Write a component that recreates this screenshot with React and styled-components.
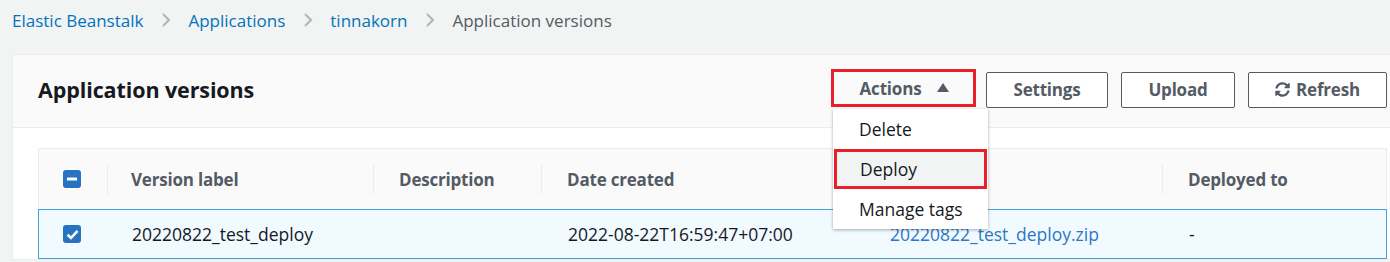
import React from "react";
import styled, { createGlobalStyle } from "styled-components";
import { FaSyncAlt } from "react-icons/fa";

const Global = createGlobalStyle`
  html, body { margin: 0; padding: 0; }
  body {
    background: #f2f3f3;
    font-family: "Open Sans", "Noto Sans", sans-serif;
    overflow: hidden;
    width: 1390px;
    height: 262px;
  }
  * { box-sizing: border-box; }
`;

const Page = styled.div`
  width: 1390px;
  height: 262px;
  overflow: hidden;
`;

const Breadcrumbs = styled.nav`
  display: flex;
  align-items: center;
  height: 40px;
  padding-left: 12px;
  margin-bottom: 14px;
  font-size: 17px;
`;

const Crumb = styled.span`
  color: ${(p) => (p.$current ? "#545b64" : "#0073bb")};
  white-space: nowrap;
`;

const Sep = styled.span`
  display: inline-flex;
  align-items: center;
  justify-content: center;
  width: 45px;
  height: 20px;
`;

const Panel = styled.section`
  margin-left: 12px;
  width: 1400px;
  background: #ffffff;
  border: 1px solid #eaeded;
  border-right: none;
`;

const PanelHeader = styled.header`
  display: flex;
  align-items: center;
  justify-content: space-between;
  height: 73px;
  padding: 0 25px 3px 25px;
  background: #fafafa;
  border-bottom: 1px solid #eaeded;
`;

const Title = styled.h2`
  margin: 0;
  font-size: 21.5px;
  font-weight: 700;
  color: #16191f;
  letter-spacing: -0.1px;
`;

const Toolbar = styled.div`
  display: flex;
  align-items: center;
  gap: 13px;
`;

const ActionsWrap = styled.div`
  position: relative;
  margin-right: -3px;
  margin-bottom: 3px;
`;

const Button = styled.button`
  display: inline-flex;
  align-items: center;
  justify-content: center;
  gap: ${(p) => p.$gap || 0}px;
  width: ${(p) => p.$w}px;
  height: 36px;
  padding: 0;
  background: #ffffff;
  border: 1px solid #545b64;
  border-radius: 2px;
  font-family: "Open Sans", "Noto Sans", sans-serif;
  font-size: 17px;
  font-weight: 700;
  color: #545b64;
  letter-spacing: -0.2px;
`;

const ActionsButton = styled(Button)`
  width: 145px;
  height: 38px;
  border: 3px solid #e8202a;
  border-radius: 0;
  background: transparent;
  gap: 16px;
  padding-left: 2px;
`;

const Triangle = styled.span`
  width: 0;
  height: 0;
  border-left: 6px solid transparent;
  border-right: 6px solid transparent;
  border-bottom: 9px solid #545b64;
  margin-top: -2px;
`;

const Menu = styled.ul`
  position: absolute;
  top: calc(100% + 2px);
  left: 2px;
  width: 155px;
  margin: 0;
  padding: 0;
  list-style: none;
  background: #ffffff;
  box-shadow: 0 1px 3px 0 rgba(0, 28, 36, 0.35);
  z-index: 5;
`;

const MenuItem = styled.li`
  display: flex;
  align-items: center;
  height: 40px;
  padding-left: ${(p) => (p.$active ? 23 : 26)}px;
  font-size: 17.5px;
  color: #16191f;
  background: ${(p) => (p.$active ? "#f2f3f3" : "#ffffff")};
  border: ${(p) => (p.$active ? "3px solid #e8202a" : "none")};
  margin: ${(p) => (p.$active ? "0 1px" : "0")};
`;

const PanelBody = styled.div`
  padding: 20px 25px 0 25px;
`;

const Table = styled.div`
  border: 1px solid #eaeded;
  border-bottom: none;
`;

const COLS = "68px 266px 168px 322px 299px 1fr";

const HeadRow = styled.div`
  display: grid;
  grid-template-columns: ${COLS};
  height: 60px;
  background: #fafafa;
`;

const HeadCell = styled.div`
  position: relative;
  display: flex;
  align-items: center;
  padding-left: ${(p) => p.$pad ?? 26}px;
  font-size: 17px;
  font-weight: 700;
  color: #545b64;
  letter-spacing: -0.2px;
  white-space: nowrap;
  &::before {
    content: "";
    display: ${(p) => (p.$sep ? "block" : "none")};
    position: absolute;
    left: 0;
    top: 15px;
    height: 30px;
    width: 1px;
    background: #eaeded;
  }
`;

const BodyRow = styled.div`
  display: grid;
  grid-template-columns: ${COLS};
  height: 50px;
  margin: 0 -1px;
  padding: 0 1px;
  background: #f1faff;
  border: 1px solid #44a6d2;
`;

const Cell = styled.div`
  display: flex;
  align-items: center;
  padding-left: ${(p) => p.$pad ?? 26}px;
  font-size: 17.5px;
  color: ${(p) => (p.$link ? "#2f77c4" : "#16191f")};
  white-space: nowrap;
`;

const Check = styled.span`
  display: inline-flex;
  align-items: center;
  justify-content: center;
  width: 18px;
  height: 18px;
  border-radius: 3px;
  background: #2872c2;
`;

const Chevron = () => (
  <svg width="10" height="16" viewBox="0 0 10 16">
    <path d="M2 2 L8 8 L2 14" fill="none" stroke="#aab7b8" strokeWidth="2" />
  </svg>
);

const Minus = () => (
  <svg width="12" height="12" viewBox="0 0 12 12">
    <rect x="1" y="4.5" width="10" height="3" fill="#ffffff" />
  </svg>
);

const Tick = () => (
  <svg width="13" height="13" viewBox="0 0 13 13">
    <path d="M1.5 6.8 L5 10 L11.5 2.8" fill="none" stroke="#ffffff" strokeWidth="2.6" />
  </svg>
);

export default function App() {
  const crumbs = ["Elastic Beanstalk", "Applications", "tinnakorn"];
  return (
    <Page>
      <Global />
      <Breadcrumbs>
        {crumbs.map((c) => (
          <React.Fragment key={c}>
            <Crumb>{c}</Crumb>
            <Sep>
              <Chevron />
            </Sep>
          </React.Fragment>
        ))}
        <Crumb $current>Application versions</Crumb>
      </Breadcrumbs>
      <Panel>
        <PanelHeader>
          <Title>Application versions</Title>
          <Toolbar>
            <ActionsWrap>
              <ActionsButton>
                Actions <Triangle />
              </ActionsButton>
              <Menu>
                <MenuItem>Delete</MenuItem>
                <MenuItem $active>Deploy</MenuItem>
                <MenuItem>Manage tags</MenuItem>
              </Menu>
            </ActionsWrap>
            <Button $w={122}>Settings</Button>
            <Button $w={114}>Upload</Button>
            <Button $w={139} $gap={6}>
              <FaSyncAlt size={15} />
              Refresh
            </Button>
          </Toolbar>
        </PanelHeader>
        <PanelBody>
          <Table>
            <HeadRow>
              <HeadCell $pad={24}>
                <Check>
                  <Minus />
                </Check>
              </HeadCell>
              <HeadCell $sep $pad={24}>Version label</HeadCell>
              <HeadCell $sep>Description</HeadCell>
              <HeadCell $sep>Date created</HeadCell>
              <HeadCell $sep />
              <HeadCell $sep>Deployed to</HeadCell>
            </HeadRow>
            <BodyRow>
              <Cell $pad={23}>
                <Check>
                  <Tick />
                </Check>
              </Cell>
              <Cell $pad={24}>20220822_test_deploy</Cell>
              <Cell />
              <Cell>2022-08-22T16:59:47+07:00</Cell>
              <Cell $link>20220822_test_deploy.zip</Cell>
              <Cell>-</Cell>
            </BodyRow>
          </Table>
        </PanelBody>
      </Panel>
    </Page>
  );
}
